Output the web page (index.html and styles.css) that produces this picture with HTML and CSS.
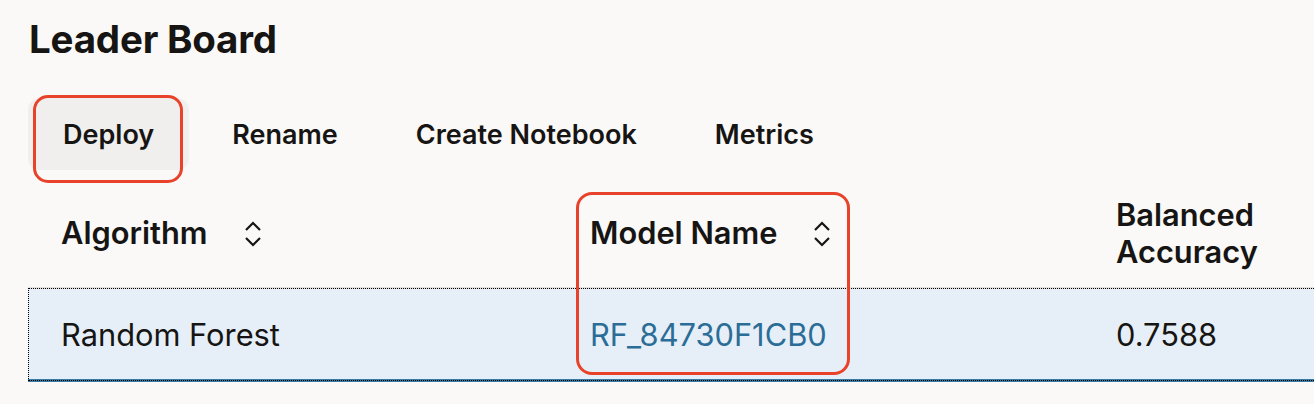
FILE: index.html
```html
<!DOCTYPE html>
<html lang="en">
<head>
    <meta charset="UTF-8">
    <meta name="viewport" content="width=device-width, initial-scale=1.0">
    <title>Leader Board</title>
    <link rel="stylesheet" href="styles.css">
</head>
<body>
    <div class="board">
        <h1 class="title">Leader Board</h1>

        <div class="toolbar">
            <button class="tool active highlight">Deploy</button>
            <button class="tool">Rename</button>
            <button class="tool">Create Notebook</button>
            <button class="tool">Metrics</button>
        </div>

        <table class="grid">
            <thead>
                <tr>
                    <th class="col-algo">
                        <span class="head">Algorithm
                            <svg class="sort" width="20" height="28" viewBox="0 0 20 28"><path d="M3 10 L10 3 L17 10 M3 18 L10 25 L17 18" fill="none" stroke="#161513" stroke-width="2.2"/></svg>
                        </span>
                    </th>
                    <th class="col-name">
                        <span class="head">Model Name
                            <svg class="sort" width="20" height="28" viewBox="0 0 20 28"><path d="M3 10 L10 3 L17 10 M3 18 L10 25 L17 18" fill="none" stroke="#161513" stroke-width="2.2"/></svg>
                        </span>
                    </th>
                    <th class="col-acc"><span class="wrap">Balanced Accuracy</span></th>
                </tr>
            </thead>
            <tbody>
                <tr class="selected">
                    <td>Random Forest</td>
                    <td><a class="link" href="#">RF_84730F1CB0</a></td>
                    <td>0.7588</td>
                </tr>
            </tbody>
        </table>

        <!-- red callout around the Model Name column -->
        <div class="callout"></div>
    </div>
</body>
</html>
```

FILE: styles.css
```css
/* Base */
body {
    margin: 0;
    background-color: #faf9f8;
    font-family: Inter, "Noto Sans", sans-serif;
    color: #161513;
    overflow: hidden;
}

.board {
    position: relative;
    padding: 13px 0 0 28px;
}

.title {
    margin: 0 0 0 1px;
    font-size: 38.5px;
    font-weight: 700;
    line-height: 52px;
    letter-spacing: -0.2px;
}

/* Toolbar */
.toolbar {
    display: flex;
    gap: 8px;
    margin-top: 33px;
}

.tool {
    height: 72px;
    padding: 0 35px;
    border: none;
    border-radius: 12px;
    background: transparent;
    font-family: inherit;
    font-size: 27px;
    font-weight: 600;
    color: #161513;
    cursor: pointer;
}

.tool.active {
    background-color: #f0efed;
}

.tool.highlight {
    position: relative;
}

.tool.highlight::after {
    content: "";
    position: absolute;
    left: 5px;
    right: 6px;
    top: -3px;
    bottom: -13px;
    border: 3px solid #e8432a;
    border-radius: 15px;
}

/* Table */
.grid {
    margin-top: 20px;
    border-collapse: collapse;
    width: 1400px;
    font-size: 30.8px;
}

.grid th {
    height: 97px;
    padding: 0 33px;
    text-align: left;
    font-weight: 600;
    border-bottom: 2px solid #e4e2de;
    vertical-align: middle;
}

.col-algo { width: 463px; }
.col-name { width: 460px; }

.head {
    display: flex;
    align-items: center;
    justify-content: space-between;
    margin-bottom: 12px;
}

.col-algo .head { width: 202px; }
.col-name .head { width: 242px; }

.sort {
    margin-top: 2px;
}

.wrap {
    display: block;
    width: 170px;
    line-height: 37px;
    margin-bottom: 12px;
}

.selected {
    background-color: #e6eff7;
    outline: 1px dotted #000;
    outline-offset: -1px;
}

.selected td {
    height: 90px;
    padding: 0 33px;
    border-bottom: 3px solid #3a7ba4;
    vertical-align: middle;
}

.link {
    color: #2b6d97;
    text-decoration: none;
}

.callout {
    position: absolute;
    left: 576px;
    top: 192px;
    width: 268px;
    height: 177px;
    border: 3px solid #e8432a;
    border-radius: 16px;
}
```
